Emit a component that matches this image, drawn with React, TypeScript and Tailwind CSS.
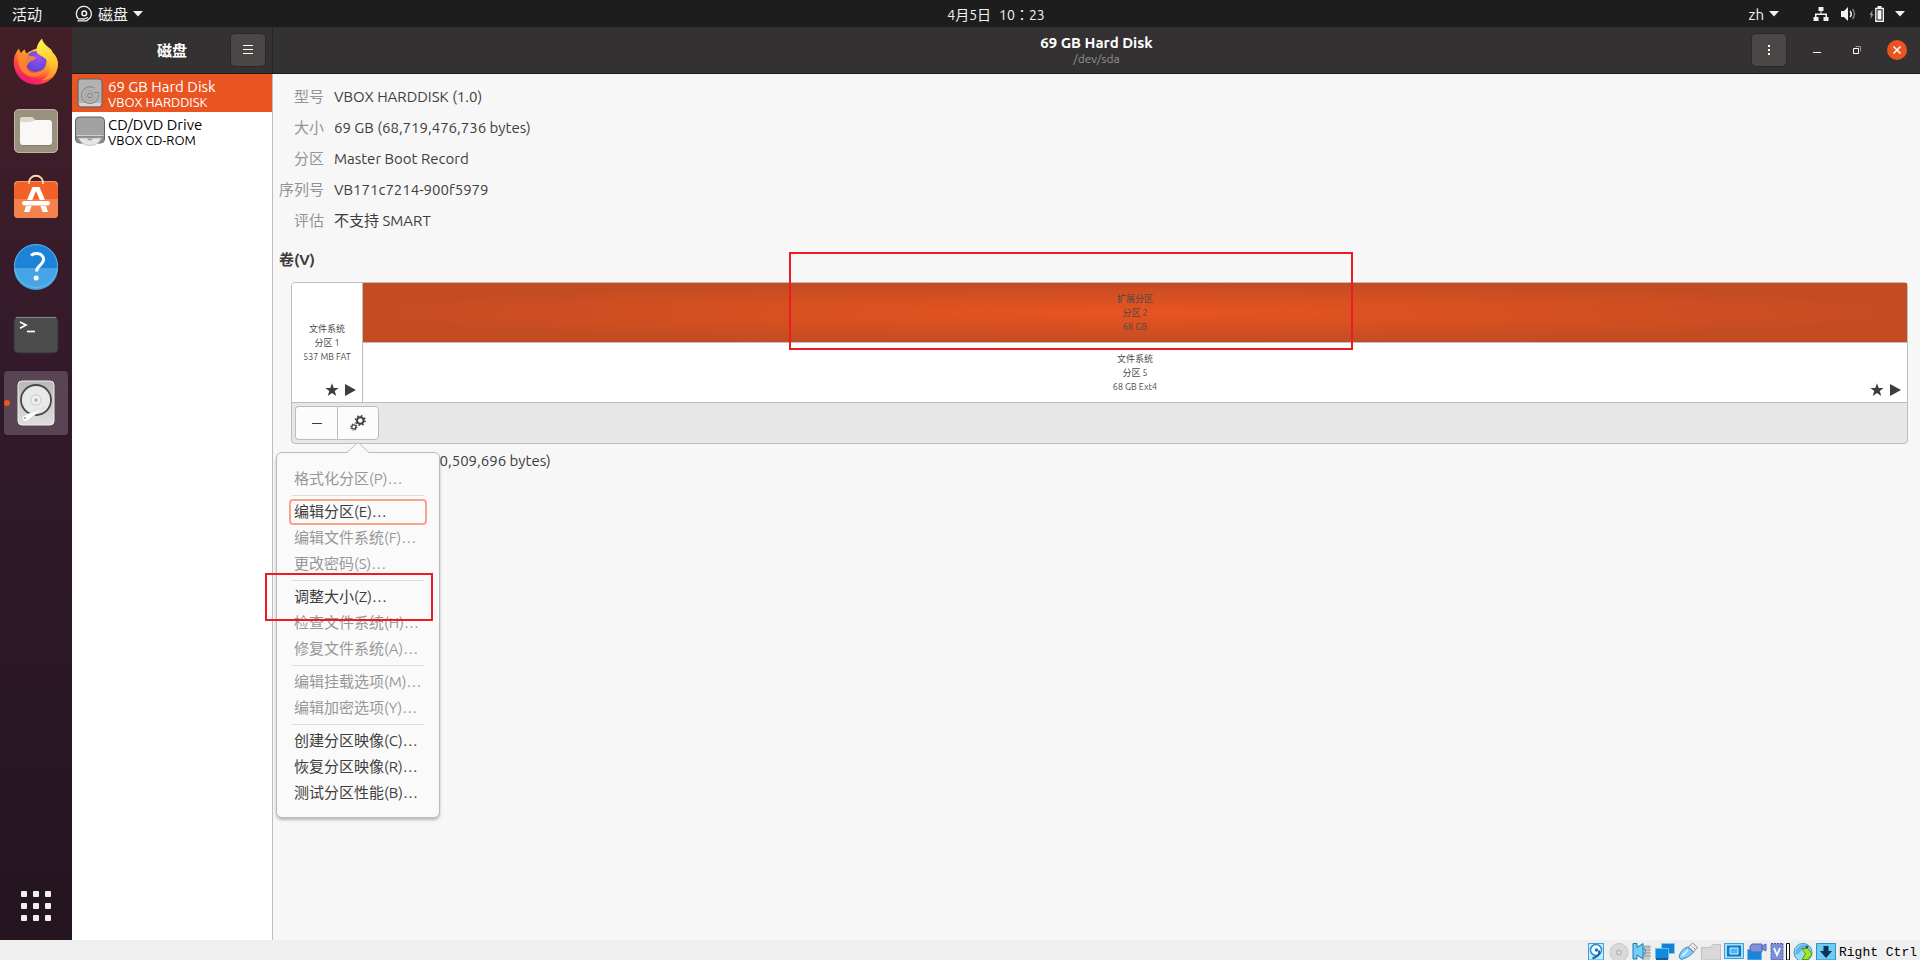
import React from "react";

const CaretDown = () => (
  <svg width="10" height="6" viewBox="0 0 10 6" aria-hidden="true">
    <path d="M0 0h10L5 5.5z" fill="#f2f2f2" />
  </svg>
);

const DiskSymbol = () => (
  <svg width="18" height="18" viewBox="0 0 18 18" fill="none" stroke="#f2f2f2" aria-hidden="true">
    <path d="M3.200 13.800A7.500 7.500 0 1 1 15.500 12.300" strokeWidth="1.300" />
    <circle cx="9.300" cy="8.400" r="2.300" strokeWidth="1.500" />
    <path d="M2.500 15.800h9.200l4-3.500M3 13.800l6 .2 4-1.500" strokeWidth="1.300" />
  </svg>
);

const Firefox = () => (
  <svg width="46" height="52" viewBox="0 0 46 52" aria-hidden="true">
    <defs>
      <linearGradient id="ffBody" x1="0.85" y1="0.1" x2="0.2" y2="0.95">
        <stop offset="0" stopColor="#ffe94a" />
        <stop offset="0.35" stopColor="#ffa62a" />
        <stop offset="0.65" stopColor="#ff4b3a" />
        <stop offset="1" stopColor="#ee1280" />
      </linearGradient>
      <radialGradient id="ffGlobe" cx="0.6" cy="0.3" r="0.8">
        <stop offset="0" stopColor="#a04df0" />
        <stop offset="0.6" stopColor="#6d4be0" />
        <stop offset="1" stopColor="#5a3bb8" />
      </radialGradient>
      <linearGradient id="ffTail" x1="0.5" y1="0" x2="0.6" y2="1">
        <stop offset="0" stopColor="#fff44f" />
        <stop offset="0.6" stopColor="#ffc531" />
        <stop offset="1" stopColor="#ff8b2c" />
      </linearGradient>
    </defs>
    <path
      d="M6 11.500c.4 2 1 3.300 2 4.400 1-1.600 2.200-2.700 3.800-3.500.2 1.600.7 2.900 1.900 4.100C20 11 30 9 36 14c4 2 9 7 8.800 13.500C44.500 39 35 47.500 23.500 47.500 11 47.500 1 38.500.8 25.500.7 19.500 3 15 6 11.500z"
      fill="url(#ffBody)"
    />
    <circle cx="23" cy="24.500" r="10.500" fill="url(#ffGlobe)" />
    <path
      d="M29 1.500c1 5 4.500 7 8.500 10.500 1.300 1.200 1.500 1.800 2.200 3.500 3.400 3 5.600 7.500 5.100 13-.8 9.500-8 15-17 14.500 8-2.500 11.500-9.500 8.800-16.500-2-5-7.600-6.500-12.600-10.500C22.500 10.500 25.500 5 29 1.500z"
      fill="url(#ffTail)"
    />
    <path
      d="M5 18.500c5-3 9.500-2 12.500.5 2.500-.3 4 .3 5.500 1.500-.5 2.200-3 3-5 3.700-3 1.300-2.500 3.500-4.500 4.800 0 5.500 6 8.500 11.500 6 3-1.500 7-2.500 7-1-3 6.500-15 8-21 2C6 31.500 4.500 25 5 18.500z"
      fill="#ff8a2d"
      opacity="0.85"
    />
    <path
      d="M8 34c5 8 17 11 27 4-6 6.500-12 9.500-19 7.500C12 43 9 39 8 34z"
      fill="#f5156c"
      opacity="0.5"
    />
  </svg>
);

const Files = () => (
  <svg width="46" height="46" viewBox="0 0 46 46" aria-hidden="true">
    <rect x="1" y="1" width="44" height="44" rx="5" fill="#99917d" />
    <rect x="1.500" y="1.500" width="43" height="43" rx="4.500" fill="none" stroke="#bdb6a4" />
    <path d="M7 32V11q0-2 2-2h10l3 3h14q3 0 3 3v20q0 3-3 3H10z" fill="#857d6b" />
    <path d="M7 15v-4q0-2 2-2h9.500q1 0 2 1l2 2V16z" fill="#dcd8cf" />
    <path d="M7 14q8 1 13.500-1 1.500-1 3-1H36q3 0 3 3v19q0 3-3 3H10q-3 0-3-3z" fill="#f9f8f6" />
  </svg>
);

const Software = () => (
  <svg width="46" height="52" viewBox="0 0 46 52" aria-hidden="true">
    <rect x="1" y="8" width="44" height="37" rx="4" fill="#f26227" />
    <path d="M1 26h44v15q0 4-4 4H5q-4 0-4-4z" fill="#f4824e" />
    <path d="M1.500 12q0-3.500 3.500-3.500h36q3.500 0 3.500 3.500" fill="none" stroke="#f99469" />
    <path d="M16 11c-1-11 15-11 14 0" fill="none" stroke="#f8d9b0" strokeWidth="1.800" />
    <path d="M19.500 14h7l5.500 13h-5.200L23 18l-3.800 9H14z" fill="#fff" />
    <rect x="9" y="28" width="28" height="4.500" rx="2.200" fill="#fff" />
    <path d="M13 33h5.500l-2 6H11zM27.500 33H33l2 6h-5.500z" fill="#fff" />
  </svg>
);

const Help = () => (
  <svg width="46" height="48" viewBox="0 0 46 48" aria-hidden="true">
    <circle cx="23" cy="23" r="22" fill="#1d83d8" />
    <path d="M1 25h44a22 22 0 0 1-44 0z" fill="#46a5e6" />
    <circle cx="23" cy="23" r="21.500" fill="none" stroke="#7cc0f0" opacity="0.700" />
    <path
      d="M18 12.500c2-1.800 4.500-2.200 6.500-2 4 .4 6.500 3.200 6 6.800-.6 4.400-7 5.700-7 11.200"
      fill="none"
      stroke="#fff"
      strokeWidth="3"
    />
    <circle cx="23.200" cy="35" r="2.500" fill="#fff" />
  </svg>
);

const Terminal = () => (
  <svg width="46" height="38" viewBox="0 0 46 38" aria-hidden="true">
    <rect x="1" y="1" width="44" height="36" rx="4" fill="#4c4c4c" stroke="#333" />
    <path d="M3 1.500h40" stroke="#8a8a8a" />
    <path d="M7 6l6 3-6 3.200" fill="none" stroke="#fff" strokeWidth="1.700" />
    <path d="M14 15.500h8" stroke="#fff" strokeWidth="1.700" />
  </svg>
);

const DisksApp = () => (
  <svg width="38" height="46" viewBox="0 0 38 46" aria-hidden="true">
    <defs>
      <linearGradient id="case" x1="0" y1="0" x2="0" y2="1">
        <stop offset="0" stopColor="#b9b9b9" />
        <stop offset="1" stopColor="#dedede" />
      </linearGradient>
    </defs>
    <rect x="1" y="1" width="36" height="44" rx="4" fill="url(#case)" stroke="#eee" />
    <circle cx="19" cy="20" r="15" fill="#e9e9e9" stroke="#484848" strokeWidth="1.800" />
    <circle cx="19" cy="20" r="6" fill="#d9d9d9" />
    <circle cx="19" cy="20" r="3.300" fill="none" stroke="#f6f6f6" strokeWidth="1.500" />
    <circle cx="19" cy="20" r="1" fill="#999" />
    <path d="M28 27L11 40.500q-3 2-5-.5t1-4.500z" fill="#fff" stroke="#c4c4c4" strokeWidth=".5" />
    <circle cx="8" cy="38" r="1" fill="#999" />
  </svg>
);

const HardDiskIcon = () => (
  <svg width="26" height="30" viewBox="0 0 26 30" aria-hidden="true">
    <rect x="1" y="1" width="24" height="28" rx="3" fill="#b5b5b5" stroke="#5d6163" />
    <path d="M2 24v2q0 2 2 2h18q2 0 2-2v-2z" fill="#d6d6d6" />
    <path d="M2 3v22h22V3q0-1-1-1H3Q2 2 2 3z" fill="#b2b2b2" />
    <path d="M17.500 10a8.500 8.500 0 1 0 4 7.500v-3h-4.500" fill="none" stroke="#858585" />
    <path d="M17 14.500a5 5 0 1 0 1 3" fill="none" stroke="#9a9a9a" strokeWidth=".8" />
    <circle cx="13" cy="17.500" r="2.400" fill="none" stroke="#808080" />
  </svg>
);

const OpticalIcon = () => (
  <svg width="30" height="30" viewBox="0 0 30 30" aria-hidden="true">
    <rect x=".5" y="1" width="29" height="26" rx="4" fill="#a2a2a2" stroke="#5f6264" />
    <path d="M1 19h28v4q0 3.500-3.500 3.500h-21Q1 26.500 1 23z" fill="#8c8c8c" />
    <path d="M1.500 19.500h27" stroke="#cfcfcf" />
    <path d="M3.500 22h23q-3 7.500-11.500 7.500T3.500 22z" fill="#e6e6e6" stroke="#aaa" strokeWidth=".6" />
    <path d="M12 22.500h6q-1 2-3 2t-3-2z" fill="#999" />
  </svg>
);

const StarPlay = () => (
  <div className="flex items-center gap-[6px]">
    <svg width="14" height="14" viewBox="0 0 14 14" aria-hidden="true">
      <path d="M7 .3l1.700 4.700h5l-4 3 1.600 5L7 10.100 2.700 13l1.600-5-4-3h5z" fill="#3d3d3d" />
    </svg>
    <svg width="11" height="12" viewBox="0 0 11 12" aria-hidden="true">
      <path d="M0 0l11 6-11 6z" fill="#3d3d3d" />
    </svg>
  </div>
);

const Gears = () => (
  <svg width="16" height="16" viewBox="0 0 16 16" fill="none" stroke="#3d3d3d" aria-hidden="true">
    <circle cx="10.300" cy="5.500" r="3.300" strokeWidth="2" />
    <circle cx="10.300" cy="5.500" r="4.800" strokeWidth="1.400" strokeDasharray="1.700 2.070" />
    <circle cx="3.800" cy="12" r="2" strokeWidth="1.200" />
    <circle cx="3.800" cy="12" r="3" strokeWidth="1.200" strokeDasharray="1.200 1.156" />
  </svg>
);

const details = [
  ["型号", "VBOX HARDDISK (1.0)"],
  ["大小", "69 GB (68,719,476,736 bytes)"],
  ["分区", "Master Boot Record"],
  ["序列号", "VB171c7214-900f5979"],
  ["评估", "不支持 SMART"],
];

const menuGroups: { label: string; enabled?: boolean; focused?: boolean }[][] = [
  [{ label: "格式化分区(P)…" }],
  [
    { label: "编辑分区(E)…", enabled: true, focused: true },
    { label: "编辑文件系统(F)…" },
    { label: "更改密码(S)…" },
  ],
  [{ label: "调整大小(Z)…", enabled: true }, { label: "检查文件系统(H)…" }, { label: "修复文件系统(A)…" }],
  [{ label: "编辑挂载选项(M)…" }, { label: "编辑加密选项(Y)…" }],
  [
    { label: "创建分区映像(C)…", enabled: true },
    { label: "恢复分区映像(R)…", enabled: true },
    { label: "测试分区性能(B)…", enabled: true },
  ],
];

function TopBar() {
  return (
    <header className="grid h-[27px] shrink-0 grid-cols-[72px_1fr_auto_1fr] items-center bg-[#1d1d1d] text-[15px] leading-[27px] text-[#f2f2f2]">
      <button className="pl-3 pt-px text-left">活动</button>
      <button className="flex items-center gap-[5px] justify-self-start pl-[3px]">
        <DiskSymbol />
        <span className="pt-px">磁盘</span>
        <CaretDown />
      </button>
      <button className="flex gap-2 pt-px text-sm leading-[26px]">
        <span>4月5日</span>
        <span className="font-['Ubuntu','Noto_Sans','Noto_Sans_CJK_TC',sans-serif]">10：23</span>
      </button>
      <div className="flex items-center justify-self-end pr-[15px]">
        <button className="mr-[34px] flex items-center gap-[5px]">
          zh
          <CaretDown />
        </button>
        <button className="flex items-center gap-[10px]" aria-label="系统菜单">
          <span className="flex items-center gap-3">
            <svg width="16" height="14" viewBox="0 0 16 14" fill="#f2f2f2" aria-hidden="true">
              <path d="M5.500 0h5v4h-2v2.500H14V10h1.500v4h-5v-4h2V8h-9v2h2v4h-5v-4H2V6.500h5.500V4h-2z" />
            </svg>
            <svg width="16" height="14" viewBox="0 0 16 14" aria-hidden="true">
              <path d="M0 4h3l4-4v14l-4-4H0z" fill="#f2f2f2" />
              <path d="M9 4q2.500 3 0 6" fill="none" stroke="#f2f2f2" strokeWidth="1.500" />
              <path d="M11.500 2q4 5 0 10" fill="none" stroke="#777" strokeWidth="1.500" />
            </svg>
            <svg width="16" height="16" viewBox="0 0 16 16" aria-hidden="true">
              <path d="M3.500 4L.5 9H2l-.5 4 3-5H3z" fill="#999" />
              <path d="M6.800 2.500h7.500v12.700H6.800z" fill="none" stroke="#f2f2f2" strokeWidth="1.400" />
              <path d="M8.500 0h4v2h-4zM8.500 4.300h4v9.200h-4z" fill="#f2f2f2" />
            </svg>
          </span>
          <CaretDown />
        </button>
      </div>
    </header>
  );
}

function Dock() {
  const slot = "relative flex h-16 w-16 items-center justify-center rounded-[4px]";
  return (
    <nav className="flex w-[72px] shrink-0 flex-col items-center gap-1 bg-linear-to-b from-[#431f27] via-[#32192b] via-40% to-[#241520] pt-1">
      <button className={slot} aria-label="Firefox"><Firefox /></button>
      <button className={slot} aria-label="文件"><Files /></button>
      <button className={slot} aria-label="软件"><Software /></button>
      <button className={slot} aria-label="帮助"><Help /></button>
      <button className={slot} aria-label="终端"><Terminal /></button>
      <button className="relative flex h-16 w-16 items-center justify-center rounded-[4px] bg-[#594454]" aria-label="磁盘">
        <span className="absolute left-0 top-[29px] h-[6px] w-[6px] rounded-full bg-[#e95420]" />
        <DisksApp />
      </button>
      <button className="mb-[19px] mt-auto grid grid-cols-3 gap-[6px]" aria-label="显示应用程序">
        {Array.from({ length: 9 }, (_, i) => (
          <span key={i} className="h-[6px] w-[6px] rounded-[1px] bg-[#f0efee]" />
        ))}
      </button>
    </nav>
  );
}

function Sidebar() {
  return (
    <aside className="flex w-[201px] shrink-0 flex-col border-r border-[#bdbdbd] bg-white">
      <button className="flex h-[38px] items-center gap-[5px] bg-[#e95420] pl-[5px] text-left text-white">
        <HardDiskIcon />
        <span className="flex flex-col">
          <span className="text-[15px] leading-[17px]">69 GB Hard Disk</span>
          <span className="text-[13px] leading-[14px]">VBOX HARDDISK</span>
        </span>
      </button>
      <button className="flex h-[38px] items-center gap-[3px] pl-[3px] text-left text-black">
        <OpticalIcon />
        <span className="flex flex-col">
          <span className="text-[15px] leading-[17px]">CD/DVD Drive</span>
          <span className="text-[13px] leading-[14px]">VBOX CD-ROM</span>
        </span>
      </button>
    </aside>
  );
}

function TitleBar() {
  const boxButton =
    "flex h-[34px] w-9 items-center justify-center rounded-[5px] border border-[#2a2828] bg-[#494846]";
  return (
    <div className="flex h-[47px] shrink-0 border-b border-[#1c1b1b] bg-[#333132] text-white">
      <div className="grid w-[201px] grid-cols-[1fr_auto_1fr] items-center border-r border-[#272626] pr-[6px]">
        <h1 className="col-start-2 pl-[6px] pt-px text-[15px] font-bold leading-5">磁盘</h1>
        <button className={boxButton + " justify-self-end"} aria-label="菜单">
          <svg width="10" height="10" viewBox="0 0 10 10" aria-hidden="true">
            <path d="M0 .5h10M0 4.500h10M0 8.500h10" stroke="#fff" />
          </svg>
        </button>
      </div>
      <div className="grid grow grid-cols-[1fr_auto_1fr] items-center">
        <div className="col-start-2 text-center">
          <h2 className="text-[15px] font-bold leading-[17px]">69 GB Hard Disk</h2>
          <p className="text-xs leading-[15px] text-[#929292]">/dev/sda</p>
        </div>
        <div className="flex items-center justify-self-end pr-[13px]">
          <button className={boxButton + " mr-[26px]"} aria-label="驱动器选项">
            <svg width="2" height="10" viewBox="0 0 2 10" fill="#fff" aria-hidden="true">
              <path d="M0 0h2v2H0zM0 4h2v2H0zM0 8h2v2H0z" />
            </svg>
          </button>
          <button className="mr-[30px] h-[10px] w-[10px]" aria-label="最小化">
            <svg width="8" height="10" viewBox="0 0 8 10" aria-hidden="true">
              <path d="M0 7.500h8" stroke="#fff" />
            </svg>
          </button>
          <button className="mr-[26px]" aria-label="还原">
            <svg width="8" height="8" viewBox="0 0 8 8" fill="none" aria-hidden="true">
              <path d="M2.500 .5h5v5" stroke="#999" />
              <path d="M.5 2.500h5v5h-5z" stroke="#fff" />
            </svg>
          </button>
          <button className="flex h-5 w-5 items-center justify-center rounded-full bg-[#e95420]" aria-label="关闭">
            <svg width="8" height="8" viewBox="0 0 8 8" aria-hidden="true">
              <path d="M.5 .5l7 7M7.500 .5l-7 7" stroke="#fff" strokeWidth="1.500" />
            </svg>
          </button>
        </div>
      </div>
    </div>
  );
}

function PartitionMenu() {
  return (
    <div
      role="menu"
      className="absolute left-1/2 top-[46px] z-10 w-[164px] -translate-x-1/2 rounded-[6px] border border-[#bcbcbc] bg-[#fafafa] px-3 pb-[11px] pt-[13px] shadow-[0_2px_3px_rgba(0,0,0,0.25)]"
    >
      <svg className="absolute -top-[11px] left-[70px]" width="22" height="12" viewBox="0 0 22 12" aria-hidden="true">
        <path d="M0 12V11L11 .5 22 11v1z" fill="#fafafa" />
        <path d="M0 10.500L11 .5l11 10" fill="none" stroke="#bcbcbc" />
      </svg>
      {menuGroups.map((group, g) => (
        <div key={g} role="group">
          {g > 0 && <hr className="mx-[3px] my-[3px] border-t border-[#dedede]" />}
          {group.map((item) => (
            <button
              key={item.label}
              role="menuitem"
              disabled={!item.enabled}
              className={[
                "block h-[26px] w-[138px] whitespace-nowrap rounded-[4px] border-2 pl-[3px] text-left text-[15px] leading-[22px]",
                item.focused ? "border-[#f4a58a]" : "border-transparent",
                item.enabled ? "text-[#3d3d3d]" : "text-[#979797]",
              ].join(" ")}
            >
              {item.label}
            </button>
          ))}
        </div>
      ))}
    </div>
  );
}

function Volumes() {
  return (
    <section className="ml-3 mr-[6px] mt-3 rounded-[4px] border border-[#bdbdbd] bg-[#e7e7e7]">
      <div className="flex h-[120px] rounded-t-[3px] border-b border-[#bdbdbd] bg-white text-center text-[9px] leading-[14px] text-[#4a4a4a]">
        <div className="relative flex w-[71px] shrink-0 flex-col justify-center border-r border-[#bdbdbd]">
          <p>文件系统</p>
          <p>分区 1</p>
          <p>537 MB FAT</p>
          <div className="absolute bottom-[5px] right-[6px]"><StarPlay /></div>
        </div>
        <div className="flex grow flex-col">
          <div className="flex h-[60px] flex-col justify-center border-b border-[#bdbdbd] bg-[radial-gradient(ellipse_at_center,#e95420_0%,#c44c22_72%)]">
            <p>扩展分区</p>
            <p>分区 2</p>
            <p>68 GB</p>
          </div>
          <div className="relative flex grow flex-col justify-center">
            <p>文件系统</p>
            <p>分区 5</p>
            <p>68 GB Ext4</p>
            <div className="absolute bottom-[5px] right-[6px]"><StarPlay /></div>
          </div>
        </div>
      </div>
      <div className="flex h-10 items-center pl-[3px]">
        <button
          className="flex h-[34px] w-[42px] items-center justify-center rounded-l-[4px] border border-r-0 border-[#bdbdbd] bg-[#fcfcfc]"
          aria-label="删除分区"
        >
          <svg width="10" height="2" viewBox="0 0 10 2" aria-hidden="true">
            <path d="M0 1h10v1H0z" fill="#3d3d3d" />
          </svg>
        </button>
        <div className="relative">
          <button
            className="flex h-[34px] w-[42px] items-center justify-center rounded-r-[4px] border border-[#bdbdbd] bg-[#fcfcfc]"
            aria-label="更多操作"
          >
            <Gears />
          </button>
          <PartitionMenu />
        </div>
      </div>
    </section>
  );
}

function StatusBar() {
  return (
    <footer className="flex h-5 shrink-0 items-start justify-end gap-[3px] overflow-hidden bg-[#efefef] pr-[3px] pt-[3px]">
      <svg width="20" height="17" viewBox="0 0 20 17" aria-hidden="true">
        <path d="M2.500 .5h15V17h-15z" fill="#c9ebfb" stroke="#3aa0dc" />
        <circle cx="10" cy="7" r="5.500" fill="#fff" stroke="#2b8bd0" strokeWidth="1.500" />
        <circle cx="10.500" cy="7" r="1.800" fill="#1577c0" />
        <path d="M13 7.500q1 5-3.500 6.500l-3 1.500" fill="none" stroke="#1567b0" strokeWidth="2" />
      </svg>
      <svg width="20" height="17" viewBox="0 0 20 17" aria-hidden="true">
        <circle cx="10" cy="9.500" r="9" fill="#dadada" stroke="#c6c6c6" />
        <circle cx="10" cy="9.500" r="3" fill="#bbb" />
        <circle cx="10" cy="9.500" r="1.200" fill="#eee" />
      </svg>
      <svg width="20" height="17" viewBox="0 0 20 17" aria-hidden="true">
        <path d="M10 2h8v15h-8z" fill="#ccc" />
        <path d="M12 4h7M12 7h7M12 10h7M12 13h7" stroke="#999" />
        <path d="M1 .5h4v4l6-4V16l-6-4v4H1z" fill="#74cdf5" stroke="#1c7ab4" />
        <path d="M12 5q3 3 0 7" fill="none" stroke="#2593cf" />
      </svg>
      <svg width="20" height="17" viewBox="0 0 20 17" aria-hidden="true">
        <path d="M6.500 .5h13v10h-13z" fill="#1680d6" stroke="#7ccbf0" />
        <path d="M.5 5.500h13v10H.5z" fill="#128ade" stroke="#64bfee" />
        <path d="M1 16h12" stroke="#1a5d96" strokeWidth="2" />
      </svg>
      <svg width="20" height="17" viewBox="0 0 20 17" aria-hidden="true">
        <path d="M10.500 4l4-4 5 4.500-4 4.500z" fill="#f4f4f4" stroke="#888" />
        <path d="M14 3.500l1 1M16 5l1 1" stroke="#555" />
        <path d="M1 14Q3 6 9.500 4l6 5Q12 14 3 16.500z" fill="#83cef5" stroke="#2c8bca" />
        <path d="M4 13l6-6" stroke="#e9f8ff" strokeWidth="1.500" />
      </svg>
      <svg width="20" height="17" viewBox="0 0 20 17" aria-hidden="true">
        <path d="M.5 17V4.500h9L12 1.500h7.500V17z" fill="#d8d8d8" stroke="#c2c2c2" />
      </svg>
      <svg width="20" height="17" viewBox="0 0 20 17" aria-hidden="true">
        <path d="M.5 .5h19v15H.5z" fill="#a4def9" stroke="#3b9fd8" />
        <path d="M3 2.500h14v11H3z" fill="#0f78c8" />
        <path d="M6 5h8v6H6z" fill="#49b7f4" stroke="#d7f2ff" />
      </svg>
      <svg width="20" height="17" viewBox="0 0 20 17" aria-hidden="true">
        <path d="M.5 6.500h14V17H.5z" fill="#1686da" stroke="#67bdec" />
        <path d="M5 1h10v8H5l-2-2V3zM15 3l4-2v7l-4-2z" fill="#7f90d8" stroke="#5566b8" />
      </svg>
      <svg width="20" height="17" viewBox="0 0 20 17" aria-hidden="true">
        <path d="M1 .5h12V17H1z" fill="#7d8ed9" stroke="#4858ac" strokeDasharray="2 1" />
        <path d="M4 5l3 7 3-7" fill="none" stroke="#fff" strokeWidth="1.800" />
        <path d="M16.500 .5h3V17h-3z" fill="#fff" stroke="#111" />
      </svg>
      <svg width="20" height="17" viewBox="0 0 20 17" aria-hidden="true">
        <circle cx="10" cy="9.500" r="9" fill="#9ad9f5" stroke="#3494cb" />
        <path d="M2 11Q4 1 13 1.500l2 3-6 2-4 5z" fill="#5fb6e2" />
        <circle cx="14" cy="4" r="1.500" fill="#1d4f78" />
        <path d="M9 5.500h6l4 5.500-4 5.500H9l3.500-5.500z" fill="#a4e32e" stroke="#539c12" />
      </svg>
      <svg width="20" height="17" viewBox="0 0 20 17" aria-hidden="true">
        <path d="M.5 .5h19V17H.5z" fill="#6ecbf5" stroke="#2f91cc" />
        <path d="M7.500 3h5v5H16l-6 7-6-7h3.500z" fill="#10335c" />
      </svg>
      <span className="font-['Liberation_Mono',monospace] text-[13px] leading-[19px] text-black">Right Ctrl</span>
    </footer>
  );
}

export default function App() {
  return (
    <div className="relative flex min-h-screen flex-col bg-[#f7f7f7] font-['Ubuntu','Noto_Sans','Noto_Sans_CJK_SC',sans-serif] text-[#3d3d3d]">
      <TopBar />
      <div className="flex grow">
        <Dock />
        <div className="flex grow flex-col">
          <TitleBar />
          <div className="flex grow">
            <Sidebar />
            <main className="grow px-[6px] pt-3">
              <dl className="grid grid-cols-[45px_1fr] gap-x-[10px] gap-y-[10px] text-[15px] leading-[21px]">
                {details.map(([label, value]) => (
                  <React.Fragment key={label}>
                    <dt className="text-right text-[#929595]">{label}</dt>
                    <dd>{value}</dd>
                  </React.Fragment>
                ))}
              </dl>
              <h3 className="mt-[18px] text-[15px] font-bold leading-[21px]">卷(V)</h3>
              <Volumes />
              <dl className="mt-[6px] grid grid-cols-[65px_1fr] gap-x-[10px] text-[15px] leading-[21px]">
                <dt className="text-right text-[#929595]">大小</dt>
                <dd>68 GB (68,180,509,696 bytes)</dd>
              </dl>
            </main>
          </div>
        </div>
      </div>
      <StatusBar />
      <div className="pointer-events-none absolute left-[789px] top-[252px] z-20 h-[98px] w-[564px] border-2 border-[#ed1c24]" />
      <div className="pointer-events-none absolute left-[265px] top-[573px] z-20 h-12 w-[168px] border-2 border-[#ed1c24]" />
    </div>
  );
}
